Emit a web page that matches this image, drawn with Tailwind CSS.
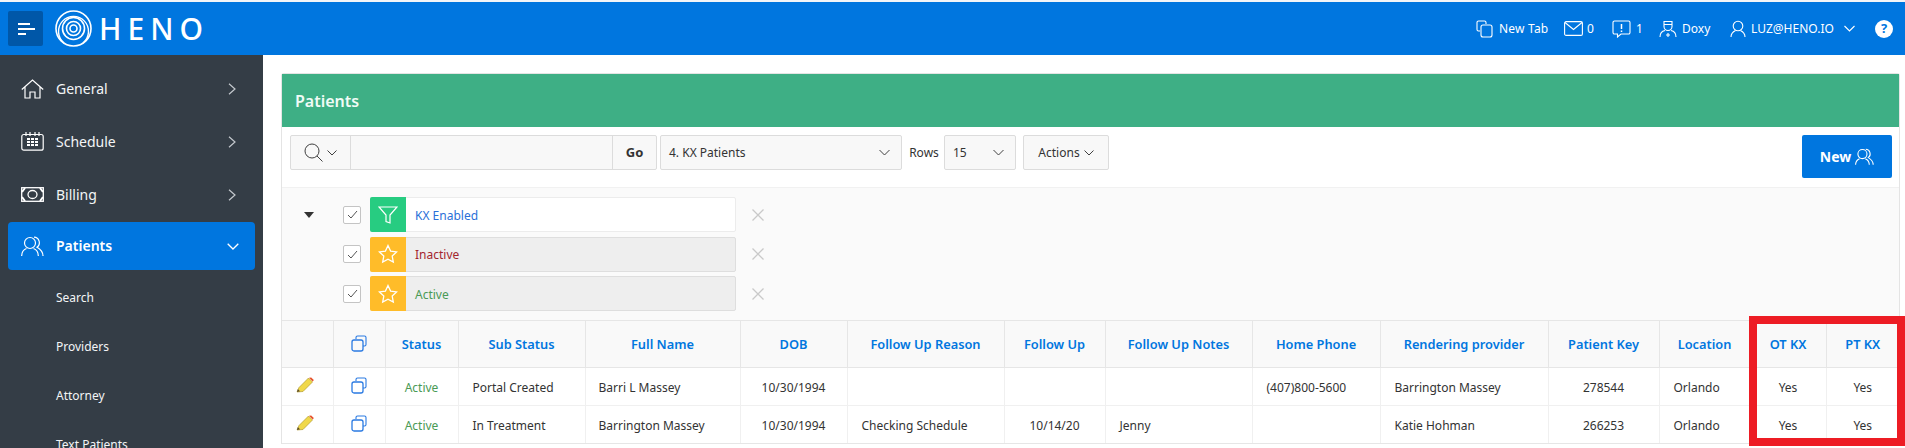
<!DOCTYPE html>
<html><head><meta charset="utf-8"><script src="https://cdn.jsdelivr.net/npm/@tailwindcss/browser@4"></script></head>
<body class="bg-white">
<div class="relative h-[448px] w-[1905px] overflow-hidden font-['Noto_Sans','Open_Sans',sans-serif] text-[#333] text-xs">
  <div class="h-[2px] bg-[#f2f5f8]"></div>
  <header class="flex h-[53px] items-center bg-[#0076df] text-white">
    <button class="ml-2 flex h-[35px] w-[35px] items-center justify-center rounded-[2px] bg-[#0057a8]">
      <svg width="18" height="14" viewBox="0 0 18 14" fill="none" stroke="white" stroke-width="2"><path d="M1 2h12M1 7h17M1 12h8"/></svg>
    </button>
    <svg class="ml-3 shrink-0" width="37" height="37" viewBox="0 0 37 37" fill="none" stroke="white" stroke-width="1.6"><circle cx="18.5" cy="18.5" r="17.5"/><path d="M9 33 A 15 15 0 1 1 28 33" stroke-width="1.4"/><circle cx="18.5" cy="18.5" r="11"/><circle cx="18.5" cy="18.5" r="7"/><circle cx="18.5" cy="18.5" r="3.5"/></svg>
    <span class="ml-[7px] text-[30px] leading-none tracking-[6px] font-medium">HENO</span>
    <div class="ml-auto flex items-center text-xs">
      <svg width="17" height="18" viewBox="0 0 17 18" fill="none" stroke="white" stroke-width="1.1"><path d="M4 11H2.500A1.500 1.500 0 0 1 1 9.500V2.500A1.500 1.500 0 0 1 2.500 1h6A1.500 1.500 0 0 1 10 2.500V4"/><rect x="5" y="5" width="11" height="12" rx="2"/></svg>
      <span class="ml-[6px] w-[50px] whitespace-nowrap tracking-[0.2px]">New Tab</span>
      <svg class="ml-[15px]" width="19" height="15" viewBox="0 0 19 15" fill="none" stroke="white" stroke-width="1.100"><rect x=".6" y=".6" width="17.800" height="13.800" rx="1.500"/><path d="M1 1.500l8.500 7 8.500-7"/></svg>
      <span class="ml-[4px] w-[10px]">0</span>
      <svg class="ml-[15px]" width="19" height="18" viewBox="0 0 19 18" fill="none" stroke="white" stroke-width="1.100"><path d="M2.500 1h14A1.500 1.500 0 0 1 18 2.500v10a1.500 1.500 0 0 1-1.500 1.500H9l-3.500 3v-3h-3A1.500 1.500 0 0 1 1 12.500v-10A1.500 1.500 0 0 1 2.500 1z"/><path d="M9.500 4v5M9.500 10.500v1.500" stroke-width="1.500"/></svg>
      <span class="ml-[5px] w-[8px]">1</span>
      <svg class="ml-[15px]" width="18" height="18" viewBox="0 0 18 18" fill="none" stroke="white" stroke-width="1.100"><path d="M5 1.500h8v5a4 4 0 0 1-8 0zM5 4.500h8M1 17c0-4 2.500-6 5-6.500M17 17c0-4-2.500-6-5-6.500M9 13v4M7 15h4"/></svg>
      <span class="ml-[5px] w-[30px]">Doxy</span>
      <svg class="ml-[18px]" width="16" height="18" viewBox="0 0 16 18" fill="none" stroke="white" stroke-width="1.100"><circle cx="8" cy="6" r="4.800"/><path d="M1 17c0-3.500 2.500-5.500 4.500-6.500M15 17c0-3.500-2.500-5.500-4.500-6.500"/></svg>
      <span class="ml-[5px] w-[79px] whitespace-nowrap">LUZ@HENO.IO</span>
      <svg class="ml-[14px]" width="11" height="7" viewBox="0 0 11 7" fill="none" stroke="white" stroke-width="1.100"><path d="M.5 1l5 5 5-5"/></svg>
      <span class="ml-[20px] mr-[12px] flex h-[18px] w-[18px] items-center justify-center rounded-full bg-white text-[13px] font-bold leading-none text-[#0076df]">?</span>
    </div>
  </header>
  <div class="flex h-[393px]">
    <aside class="h-full w-[263px] shrink-0 bg-[#343d46] pt-[7px] text-[#f3f5f6]">
      <div class="flex h-[53px] items-center pl-[21px] pr-[27px] text-sm">
        <svg width="23" height="20" viewBox="0 0 23 20" fill="none" stroke="white" stroke-width="1.200"><path d="M.8 10.500L11.500 1l10.700 9.500M4 8v11h5v-6h5v6h5V8"/></svg>
        <span class="ml-3">General</span>
        <svg class="ml-auto" width="8" height="12" viewBox="0 0 8 12" fill="none" stroke="#c4c9ce" stroke-width="1.200"><path d="M1 .7l6 5.300-6 5.300"/></svg>
      </div>
      <div class="flex h-[53px] items-center pl-[21px] pr-[27px] text-sm">
        <svg width="23" height="19" viewBox="0 0 23 19" fill="none" stroke="white" stroke-width="1.200"><rect x=".8" y="2.500" width="21.400" height="15.700" rx="2"/><path d="M5 0v4M9 0v4M14 0v4M18 0v4"/><path d="M6 7h11M6 10h11M6 13h11" stroke-width="2" stroke-dasharray="3 1"/></svg>
        <span class="ml-3">Schedule</span>
        <svg class="ml-auto" width="8" height="12" viewBox="0 0 8 12" fill="none" stroke="#c4c9ce" stroke-width="1.200"><path d="M1 .7l6 5.300-6 5.300"/></svg>
      </div>
      <div class="flex h-[53px] items-center pl-[21px] pr-[27px] text-sm">
        <svg width="23" height="15" viewBox="0 0 23 15" fill="none" stroke="white" stroke-width="1.300"><rect x=".7" y=".7" width="21.600" height="13.600"/><ellipse cx="11.500" cy="7.500" rx="4.500" ry="4"/><path d="M1 5l3-4M1 10l3 4M22 5l-3-4M22 10l-3 4" stroke-width="2"/></svg>
        <span class="ml-3">Billing</span>
        <svg class="ml-auto" width="8" height="12" viewBox="0 0 8 12" fill="none" stroke="#c4c9ce" stroke-width="1.200"><path d="M1 .7l6 5.300-6 5.300"/></svg>
      </div>
      <div class="mx-2 mt-px flex h-[48px] items-center rounded-[4px] bg-[#0076df] pl-[13px] pr-4 text-sm font-semibold text-white">
        <svg width="23" height="21" viewBox="0 0 23 21" fill="none" stroke="white" stroke-width="1.200"><circle cx="9" cy="7" r="5.500"/><path d="M.7 20c0-4 2.300-6.500 4.800-7.500M17.300 20c0-4-2.300-6.500-4.800-7.500M13 1.200a5.500 5.500 0 0 1 3 10c2.500 1.500 6 3.500 6 8.800"/></svg>
        <span class="ml-3">Patients</span>
        <svg class="ml-auto" width="12" height="7" viewBox="0 0 12 7" fill="none" stroke="white" stroke-width="1.300"><path d="M.7.700L6 6l5.300-5.300"/></svg>
      </div>
      <div class="mt-[3px] flex h-[49px] items-center pl-14">Search</div>
      <div class="flex h-[49px] items-center pl-14">Providers</div>
      <div class="flex h-[49px] items-center pl-14">Attorney</div>
      <div class="flex h-[49px] items-center pl-14">Text Patients</div>
    </aside>
    <main class="min-w-0 flex-1 pl-[18px] pr-[5px] pt-[18px]">
      <div class="rounded-t-[3px] border-x border-t border-[#e4e4e4]">
        <div class="flex h-[53px] items-center bg-[#3eaf85] pl-[13px] text-base font-semibold text-[#f0fbf6]">Patients</div>
        <div class="flex h-[60px] items-start bg-white pl-2 pt-2">
          <div class="flex h-[35px] w-[367px] rounded-[2px] border border-[#dcdcdc] bg-[#f8f8f8]">
            <div class="flex w-[60px] items-center justify-center gap-1 border-r border-[#dcdcdc]">
              <svg width="19" height="19" viewBox="0 0 19 19" fill="none" stroke="#404040" stroke-width="1"><circle cx="8" cy="8" r="7"/><path d="M13 13l5.500 5.500"/></svg>
              <svg width="10" height="6" viewBox="0 0 10 6" fill="none" stroke="#404040"><path d="M.5.500L5 5 9.500.500"/></svg>
            </div>
            <div class="flex-1"></div>
            <div class="flex w-[44px] items-center justify-center border-l border-[#dcdcdc] text-[13px] font-bold text-[#333]">Go</div>
          </div>
          <div class="ml-[3px] flex h-[35px] w-[242px] items-center rounded-[2px] border border-[#dcdcdc] bg-[#f8f8f8] pl-2 pr-[11px]">4. KX Patients
            <svg class="ml-auto" width="11" height="7" viewBox="0 0 11 7" fill="none" stroke="#404040"><path d="M.5 1l5 5 5-5"/></svg>
          </div>
          <div class="flex h-[35px] w-[42px] items-center justify-center pl-[2px]">Rows</div>
          <div class="flex h-[35px] w-[72px] items-center rounded-[2px] border border-[#dcdcdc] bg-[#f8f8f8] pl-2 pr-[11px]">15
            <svg class="ml-auto" width="11" height="7" viewBox="0 0 11 7" fill="none" stroke="#404040"><path d="M.5 1l5 5 5-5"/></svg>
          </div>
          <div class="ml-[7px] flex h-[35px] w-[86px] items-center justify-center gap-1 rounded-[2px] border border-[#dcdcdc] bg-[#f8f8f8]">Actions
            <svg width="10" height="6" viewBox="0 0 10 6" fill="none" stroke="#404040"><path d="M.5.500L5 5 9.500.500"/></svg>
          </div>
          <div class="ml-auto mr-[7px] flex h-[43px] w-[90px] items-center justify-center gap-1 rounded-[2px] bg-[#0076df] text-sm font-bold text-white">New
            <svg width="19" height="18" viewBox="0 0 23 21" fill="none" stroke="white" stroke-width="1.300"><circle cx="9" cy="7" r="5.500"/><path d="M.7 20c0-4 2.300-6.500 4.800-7.500M17.300 20c0-4-2.300-6.500-4.800-7.500M13 1.200a5.500 5.500 0 0 1 3 10c2.500 1.500 6 3.500 6 8.800"/></svg>
          </div>
        </div>
        <div class="flex h-[133px] border-t border-[#f1f1f1] bg-[#fafafa] pt-[9px]">
          <div class="w-[61px] shrink-0 pl-[22px] pt-[15px]"><div class="h-0 w-0 border-x-[5px] border-t-[6px] border-x-transparent border-t-[#333]"></div></div>
          <div class="flex flex-col gap-[4.500px]">
            <div class="flex h-[35px] items-center">
              <span class="flex h-[18px] w-[18px] items-center justify-center rounded-[2px] border border-[#c4c4c4] bg-white"><svg width="11" height="9" viewBox="0 0 11 9" fill="none" stroke="#555"><path d="M1 5l3 3 6-7"/></svg></span>
              <div class="ml-[9px] flex h-[35px] w-[366px] items-center rounded-[2px] border border-[#ececec] bg-white">
                <span class="-my-px -ml-px flex h-[35px] w-[36px] items-center justify-center rounded-l-[2px] bg-[#27cc81]"><svg width="20" height="20" viewBox="0 0 20 20" fill="none" stroke="white" stroke-width="1.200"><path d="M1 2h18l-7 8v8l-4-1.500V10z"/></svg></span>
                <span class="ml-[9px] mt-[2px] text-[#2a70d8]">KX Enabled</span>
              </div>
              <svg class="ml-4" width="12" height="12" viewBox="0 0 12 12" stroke="#c9c9c9" stroke-width="1.300"><path d="M.5.500l11 11M11.500.500l-11 11"/></svg>
            </div>
            <div class="flex h-[35px] items-center">
              <span class="flex h-[18px] w-[18px] items-center justify-center rounded-[2px] border border-[#c4c4c4] bg-white"><svg width="11" height="9" viewBox="0 0 11 9" fill="none" stroke="#555"><path d="M1 5l3 3 6-7"/></svg></span>
              <div class="ml-[9px] flex h-[35px] w-[366px] items-center rounded-[2px] border border-[#dedede] bg-[#eeeeee]">
                <span class="-my-px -ml-px flex h-[35px] w-[36px] items-center justify-center rounded-l-[2px] bg-[#ffbc29]"><svg width="20" height="20" viewBox="0 0 20 20" fill="none" stroke="white" stroke-width="1.300"><path d="M10 1.500l2.600 5.600 6 .8-4.400 4.200 1.100 6L10 15.200 4.700 18.100l1.100-6L1.400 7.900l6-.8z"/></svg></span>
                <span class="ml-[9px] mt-[2px] text-[#a3262e]">Inactive</span>
              </div>
              <svg class="ml-4" width="12" height="12" viewBox="0 0 12 12" stroke="#c9c9c9" stroke-width="1.300"><path d="M.5.500l11 11M11.500.500l-11 11"/></svg>
            </div>
            <div class="flex h-[35px] items-center">
              <span class="flex h-[18px] w-[18px] items-center justify-center rounded-[2px] border border-[#c4c4c4] bg-white"><svg width="11" height="9" viewBox="0 0 11 9" fill="none" stroke="#555"><path d="M1 5l3 3 6-7"/></svg></span>
              <div class="ml-[9px] flex h-[35px] w-[366px] items-center rounded-[2px] border border-[#dedede] bg-[#eeeeee]">
                <span class="-my-px -ml-px flex h-[35px] w-[36px] items-center justify-center rounded-l-[2px] bg-[#ffbc29]"><svg width="20" height="20" viewBox="0 0 20 20" fill="none" stroke="white" stroke-width="1.300"><path d="M10 1.500l2.600 5.600 6 .8-4.400 4.200 1.100 6L10 15.200 4.700 18.100l1.100-6L1.400 7.900l6-.8z"/></svg></span>
                <span class="ml-[9px] mt-[2px] text-[#4a9a55]">Active</span>
              </div>
              <svg class="ml-4" width="12" height="12" viewBox="0 0 12 12" stroke="#c9c9c9" stroke-width="1.300"><path d="M.5.500l11 11M11.500.500l-11 11"/></svg>
            </div>
          </div>
        </div>
        <table class="w-full table-fixed border-collapse bg-white">
          <colgroup>
            <col class="w-[51px]"><col class="w-[52px]"><col class="w-[73px]"><col class="w-[127px]"><col class="w-[155px]"><col class="w-[107px]"><col class="w-[157px]"><col class="w-[101px]"><col class="w-[147px]"><col class="w-[128px]"><col class="w-[168px]"><col class="w-[111px]"><col class="w-[91px]"><col class="w-[76px]"><col>
          </colgroup>
          <thead>
            <tr class="h-[47px] bg-[#f9f9f9] text-center text-[12.800px] text-[#0076df] [&>th]:border [&>th]:border-[#e6e6e6] [&>th]:pt-px [&>th]:font-semibold [&>th:first-child]:border-l-0 [&>th:last-child]:border-r-0">
              <th></th>
              <th><svg class="mx-auto -mt-[3px]" width="16" height="17" viewBox="0 0 16 17" fill="none" stroke="#2a7ae2" stroke-width="1.100"><path d="M5 4V2.500A1.500 1.500 0 0 1 6.500 1h7A1.500 1.500 0 0 1 15 2.500v7a1.500 1.500 0 0 1-1.500 1.500H12"/><rect x="1" y="5" width="11" height="11" rx="2" stroke-width="1.300"/></svg></th>
              <th>Status</th><th>Sub Status</th><th>Full Name</th><th>DOB</th><th>Follow Up Reason</th><th>Follow Up</th><th>Follow Up Notes</th><th>Home Phone</th><th>Rendering provider</th><th>Patient Key</th><th>Location</th><th>OT KX</th><th>PT KX</th>
            </tr>
          </thead>
          <tbody class="[&_td]:border [&_td]:border-[#f0f0f0] [&_td]:pt-[2px] [&_td:first-child]:border-l-0 [&_td:last-child]:border-r-0 [&_tr:last-child_td]:border-b-[#e6e6e6]">
            <tr class="h-[38px]">
              <td><svg class="ml-[14px] -mt-[4px]" width="18" height="18" viewBox="0 0 18 18"><path d="M1 15l2-4.500L12.500 1l4 4L7 14.500z" fill="#f0d84a" stroke="#a89020" stroke-width=".6"/><path d="M1 15l.8-3 2.200 2.200z" fill="#5a4a2a"/><path d="M13 .8l3.800 3.800 1-1.600-2.600-2.600z" fill="#e8502a"/></svg></td>
              <td><svg class="mx-auto -mt-[4px]" width="16" height="17" viewBox="0 0 16 17" fill="none" stroke="#2a7ae2" stroke-width="1.100"><path d="M5 4V2.500A1.500 1.500 0 0 1 6.500 1h7A1.500 1.500 0 0 1 15 2.500v7a1.500 1.500 0 0 1-1.500 1.500H12"/><rect x="1" y="5" width="11" height="11" rx="2" stroke-width="1.300"/></svg></td>
              <td class="text-center text-[#4a9a55]">Active</td><td class="pl-[14px]">Portal Created</td><td class="pl-[13px]">Barri L Massey</td><td class="text-center">10/30/1994</td><td class="pl-[14px]"></td><td class="text-center"></td><td class="pl-[14px]"></td><td class="pl-[14px]">(407)800-5600</td><td class="pl-[14px]">Barrington Massey</td><td class="text-center">278544</td><td class="pl-[14px]">Orlando</td><td class="text-center">Yes</td><td class="text-center">Yes</td>
            </tr>
            <tr class="h-[38px]">
              <td><svg class="ml-[14px] -mt-[4px]" width="18" height="18" viewBox="0 0 18 18"><path d="M1 15l2-4.500L12.500 1l4 4L7 14.500z" fill="#f0d84a" stroke="#a89020" stroke-width=".6"/><path d="M1 15l.8-3 2.200 2.200z" fill="#5a4a2a"/><path d="M13 .8l3.800 3.800 1-1.600-2.600-2.600z" fill="#e8502a"/></svg></td>
              <td><svg class="mx-auto -mt-[4px]" width="16" height="17" viewBox="0 0 16 17" fill="none" stroke="#2a7ae2" stroke-width="1.100"><path d="M5 4V2.500A1.500 1.500 0 0 1 6.500 1h7A1.500 1.500 0 0 1 15 2.500v7a1.500 1.500 0 0 1-1.500 1.500H12"/><rect x="1" y="5" width="11" height="11" rx="2" stroke-width="1.300"/></svg></td>
              <td class="text-center text-[#4a9a55]">Active</td><td class="pl-[14px]">In Treatment</td><td class="pl-[13px]">Barrington Massey</td><td class="text-center">10/30/1994</td><td class="pl-[14px]">Checking Schedule</td><td class="text-center">10/14/20</td><td class="pl-[14px]">Jenny</td><td class="pl-[14px]"></td><td class="pl-[14px]">Katie Hohman</td><td class="text-center">266253</td><td class="pl-[14px]">Orlando</td><td class="text-center">Yes</td><td class="text-center">Yes</td>
            </tr>
          </tbody>
        </table>
      </div>
    </main>
  </div>
  <div class="absolute left-[1749px] top-[316px] h-[130px] w-[156px] border-8 border-[#ed1c24]"></div>
</div>
</body></html>
